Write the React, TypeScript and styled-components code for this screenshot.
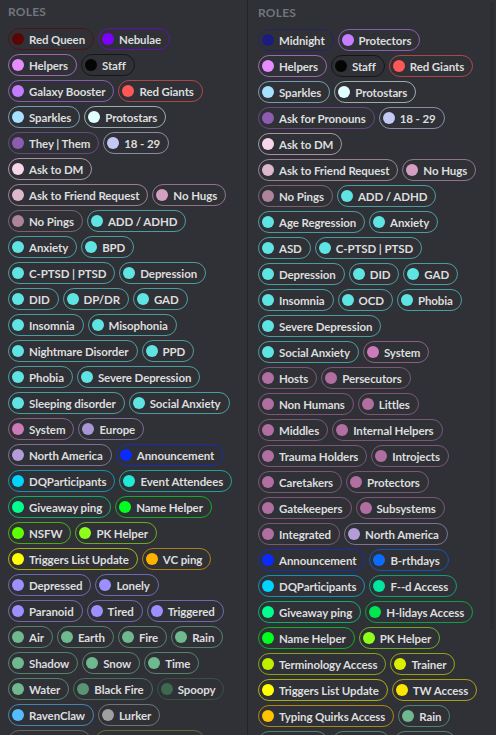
import styled, { createGlobalStyle } from 'styled-components';

const GlobalStyle = createGlobalStyle`
    html, body {
        margin: 0;
        padding: 0;
        background-color: #2f3136;
    }
    body {
        font-family: Lato, "Open Sans", sans-serif;
    }
`;

const Page = styled.div`
    display: flex;
    width: 496px;
    height: 735px;
    overflow: hidden;
    background-color: #2f3136;
`;

const Panel = styled.section<{ $first?: boolean }>`
    position: relative;
    display: flex;
    flex-direction: column;
    box-sizing: border-box;
    width: ${(p) => (p.$first ? '247px' : '249px')};
    padding: ${(p) => (p.$first ? '4px 0 0 8px' : '5px 0 0 10px')};
    border-left: ${(p) => (p.$first ? 'none' : '1px solid #222427')};
`;

// thin scrollbar thumb sitting over the right panel
const ScrollThumb = styled.div`
    position: absolute;
    top: 2px;
    right: 2px;
    width: 4px;
    height: 628px;
    border-radius: 2px;
    background-color: #2a2c30;
`;

const Heading = styled.h3`
    margin: 0 0 8px;
    height: 16px;
    line-height: 16px;
    font-size: 12px;
    font-weight: 700;
    letter-spacing: 0.2px;
    text-transform: uppercase;
    color: #72767d;
`;

const RoleList = styled.div`
    display: flex;
    flex-direction: column;
    gap: 4px;
`;

const RoleRow = styled.div`
    display: flex;
    gap: 4px;
`;

const Role = styled.div<{ $color: string }>`
    display: inline-flex;
    align-items: center;
    box-sizing: border-box;
    height: 22px;
    padding-right: 8px;
    border: 1px solid ${(p) => p.$color}99;
    border-radius: 11px;
    white-space: nowrap;
    font-size: 11.5px;
    font-weight: 700;
    letter-spacing: -0.1px;
    color: #dcddde;
`;

const Dot = styled.span<{ $color: string }>`
    flex: none;
    width: 12px;
    height: 12px;
    margin: 0 5px 0 3px;
    border-radius: 50%;
    background-color: ${(p) => p.$color};
`;

type RoleData = [string, string];

const CYAN = '#5fe4e4';
const SAD = '#9d8fff';
const ELEM = '#6fb98f';
const ALTER = '#b06fa0';

const leftRoles: RoleData[][] = [
    [['Red Queen', '#5c0505'], ['Nebulae', '#7f00ff']],
    [['Helpers', '#e68cff'], ['Staff', '#050505']],
    [['Galaxy Booster', '#c27cff'], ['Red Giants', '#ff5656']],
    [['Sparkles', '#a6e1ff'], ['Protostars', '#e1ffff']],
    [['They | Them', '#8b5cb0'], ['18 - 29', '#c3c8f5']],
    [['Ask to DM', '#f8d6ea']],
    [['Ask to Friend Request', '#ddb8cc'], ['No Hugs', '#d59fc2']],
    [['No Pings', '#ad8499'], ['ADD / ADHD', CYAN]],
    [['Anxiety', CYAN], ['BPD', CYAN]],
    [['C-PTSD | PTSD', CYAN], ['Depression', CYAN]],
    [['DID', CYAN], ['DP/DR', CYAN], ['GAD', CYAN]],
    [['Insomnia', CYAN], ['Misophonia', CYAN]],
    [['Nightmare Disorder', CYAN], ['PPD', CYAN]],
    [['Phobia', CYAN], ['Severe Depression', CYAN]],
    [['Sleeping disorder', CYAN], ['Social Anxiety', CYAN]],
    [['System', '#cc7ab8'], ['Europe', '#a996d8']],
    [['North America', '#b39cd9'], ['Announcement', '#0a2bff']],
    [['DQParticipants', '#00d4ff'], ['Event Attendees', '#20e9d5']],
    [['Giveaway ping', '#00ff8c'], ['Name Helper', '#00ff1e']],
    [['NSFW', '#5eff00'], ['PK Helper', '#8cff1a']],
    [['Triggers List Update', '#ffff00'], ['VC ping', '#ffb300']],
    [['Depressed', SAD], ['Lonely', SAD]],
    [['Paranoid', SAD], ['Tired', SAD], ['Triggered', SAD]],
    [['Air', ELEM], ['Earth', ELEM], ['Fire', ELEM], ['Rain', ELEM]],
    [['Shadow', ELEM], ['Snow', ELEM], ['Time', ELEM]],
    [['Water', ELEM], ['Black Fire', '#5a9474'], ['Spoopy', '#3d6a4f']],
    [['RavenClaw', '#55bdff'], ['Lurker', '#a0a0a0']],
    [['Hufflepuff', '#8a8a8a'], ['Slytherin House', '#7a9a3a']],
];

const rightRoles: RoleData[][] = [
    [['Midnight', '#1c1c80'], ['Protectors', '#c77dff']],
    [['Helpers', '#e68cff'], ['Staff', '#050505'], ['Red Giants', '#ff5656']],
    [['Sparkles', '#a6e1ff'], ['Protostars', '#e1ffff']],
    [['Ask for Pronouns', '#8b5cb0'], ['18 - 29', '#c3c8f5']],
    [['Ask to DM', '#f8d6ea']],
    [['Ask to Friend Request', '#ddb8cc'], ['No Hugs', '#d59fc2']],
    [['No Pings', '#ad8499'], ['ADD / ADHD', CYAN]],
    [['Age Regression', CYAN], ['Anxiety', CYAN]],
    [['ASD', CYAN], ['C-PTSD | PTSD', CYAN]],
    [['Depression', CYAN], ['DID', CYAN], ['GAD', CYAN]],
    [['Insomnia', CYAN], ['OCD', CYAN], ['Phobia', CYAN]],
    [['Severe Depression', CYAN]],
    [['Social Anxiety', CYAN], ['System', '#cc7ab8']],
    [['Hosts', ALTER], ['Persecutors', ALTER]],
    [['Non Humans', ALTER], ['Littles', ALTER]],
    [['Middles', ALTER], ['Internal Helpers', ALTER]],
    [['Trauma Holders', ALTER], ['Introjects', ALTER]],
    [['Caretakers', ALTER], ['Protectors', ALTER]],
    [['Gatekeepers', ALTER], ['Subsystems', ALTER]],
    [['Integrated', ALTER], ['North America', '#b39cd9']],
    [['Announcement', '#0a2bff'], ['B-rthdays', '#0a6bff']],
    [['DQParticipants', '#00d4ff'], ['F--d Access', '#00e6a0']],
    [['Giveaway ping', '#00ff8c'], ['H-lidays Access', '#00e650']],
    [['Name Helper', '#00ff1e'], ['PK Helper', '#8cff1a']],
    [['Terminology Access', '#c0f000'], ['Trainer', '#dcef00']],
    [['Triggers List Update', '#ffff00'], ['TW Access', '#ffe600']],
    [['Typing Quirks Access', '#ffc200'], ['Rain', ELEM]],
    [['Shadow', ELEM], ['Snow', ELEM], ['Water', ELEM]],
];

const RolePanel = ({ rows, first }: { rows: RoleData[][]; first?: boolean }) => (
    <Panel $first={first}>
        <Heading>Roles</Heading>
        <RoleList>
            {rows.map((row, i) => (
                <RoleRow key={i}>
                    {row.map(([name, color]) => (
                        <Role key={name} $color={color}>
                            <Dot $color={color} />
                            {name}
                        </Role>
                    ))}
                </RoleRow>
            ))}
        </RoleList>
        {!first && <ScrollThumb />}
    </Panel>
);

const App = () => {
    return (
        <Page>
            <GlobalStyle />
            <RolePanel rows={leftRoles} first />
            <RolePanel rows={rightRoles} />
        </Page>
    );
};

export default App;
